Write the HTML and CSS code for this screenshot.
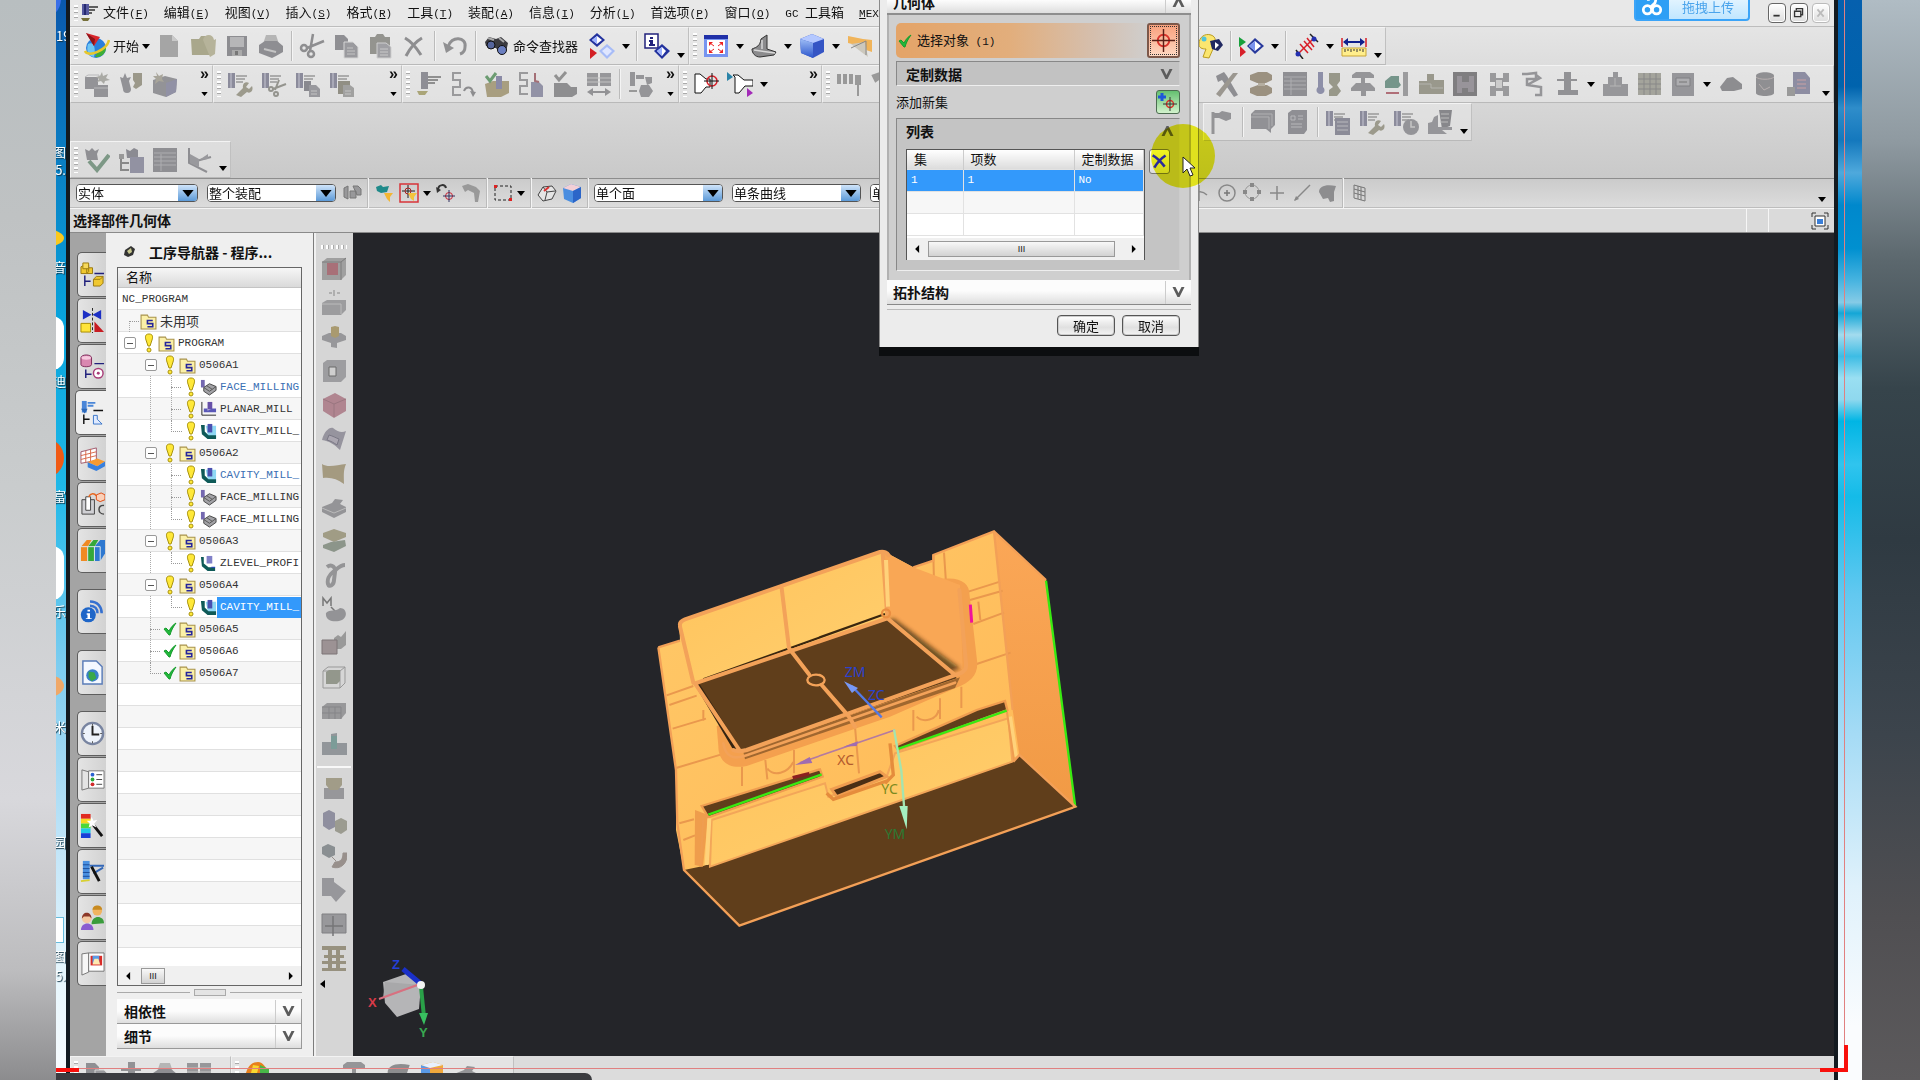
FILE: index.html
```html
<!DOCTYPE html>
<html lang="zh-CN">
<head>
<meta charset="utf-8">
<title>NX 加工</title>
<link rel="stylesheet" href="styles.css">
</head>
<body>
<svg class="sprite" aria-hidden="true">
  <defs>
    <linearGradient id="gBlue" x1="0" y1="0" x2="0" y2="1"><stop offset="0" stop-color="#9dbcf5"/><stop offset="1" stop-color="#2c56cc"/></linearGradient>
    <linearGradient id="gFace" x1="0" y1="0" x2="1" y2="1"><stop offset="0" stop-color="#ffc35c"/><stop offset="1" stop-color="#ffcf6e"/></linearGradient>
    <linearGradient id="gWall" x1="0" y1="0" x2="1" y2="1"><stop offset="0" stop-color="#ffc968"/><stop offset="1" stop-color="#ffb654"/></linearGradient>
    <linearGradient id="gSide" x1="0" y1="0" x2="0" y2="1"><stop offset="0" stop-color="#fba757"/><stop offset="1" stop-color="#f19a45"/></linearGradient>
    <filter id="soft"><feGaussianBlur stdDeviation="7"/></filter>
  </defs>
  <symbol id="app" viewBox="0 0 20 20"><path d="M3 1h7v11H3z" fill="#56599e"/><path d="M5 1h2v11H5z" fill="#262a70"/><path d="M10 4h9M10 7h6M10 10h3" stroke="#333" stroke-width="1.5"/><path d="M2 15h9l-2 3H4z" fill="#76703a"/></symbol>
  <symbol id="nx" viewBox="0 0 28 28"><circle cx="14" cy="16" r="10" fill="#2a7fdc"/><path d="M6 12c6-3 8 4 6 13-6-1-8-7-6-13z" fill="#6fc6f4"/><path d="M13 25c4-8 6-10 11-9 0 5-5 10-11 9z" fill="#3fae35"/><path d="M3 19c3 7 22-1 24-11" fill="none" stroke="#e6c72c" stroke-width="2.5"/><path d="M4 1l14 4-6 9z" fill="#d8262c"/><path d="M4 1l9 6-1 7z" fill="#8c1419"/></symbol>
  <symbol id="new" viewBox="0 0 26 26"><path d="M4 2h12l6 6v16H4z" fill="#a5a5a5"/><path d="M16 2v6h6" fill="#c9c9c9"/></symbol>
  <symbol id="open" viewBox="0 0 26 26"><path d="M1 6h8l2-3h5v5h7v14H2z" fill="#a9a78c"/><path d="M13 7C14 1 23 0 24 7l2-1-1 15-5 3z" fill="#b6b39a"/></symbol>
  <symbol id="save" viewBox="0 0 26 26"><path d="M3 3h20v20H3z" fill="#8d8d91"/><path d="M6 4h14v10H6z" fill="#b6b6b8"/><path d="M8 17h10v6H8z" fill="#aaa"/><path d="M11 18h3v4h-3z" fill="#777"/></symbol>
  <symbol id="print" viewBox="0 0 26 26"><path d="M8 2h10l3 9H5z" fill="#b5b5b5"/><path d="M1 12l6-4h12l6 5v6l-7 4-4 2-13-5z" fill="#8e8e92"/><path d="M6 16l12 3" stroke="#c5c5c5" stroke-width="2"/></symbol>
  <symbol id="cut" viewBox="0 0 26 26"><g fill="none" stroke="#8e8e90" stroke-width="2.5"><path d="M14 1l-3 17M25 8L8 15"/><circle cx="5" cy="15" r="3"/><circle cx="12" cy="21" r="3"/></g></symbol>
  <symbol id="copy" viewBox="0 0 26 26"><path d="M2 2h9l4 4v11H2z" fill="#8f8f93"/><path d="M11 9h9l5 5v11H11z" fill="#9a9a9e" stroke="#d5d5d5"/><path d="M14 15h6M14 18h8M14 21h8" stroke="#c4c4c4"/></symbol>
  <symbol id="paste" viewBox="0 0 26 26"><path d="M3 4h5l2-3h6l2 3h5v17H3z" fill="#94948f"/><path d="M10 10h9l5 4v11H10z" fill="#a0a0a4" stroke="#cfcfcf"/><path d="M13 16h8M13 19h8M13 22h8" stroke="#c9c9c9"/></symbol>
  <symbol id="del" viewBox="0 0 26 26"><path d="M4 5c7 4 11 9 16 17M21 5C14 9 9 15 5 23" fill="none" stroke="#8e8e90" stroke-width="3"/></symbol>
  <symbol id="undo" viewBox="0 0 26 26"><path d="M6 14C9 2 25 4 23 14c0 4-2 6-5 7" fill="none" stroke="#909092" stroke-width="3"/><path d="M1 9l3 11 8-5z" fill="#909092"/></symbol>
  <symbol id="bino" viewBox="0 0 26 26"><path d="M1 9L5 4l7 2 5-2 7 6-2 9-5 3-5-7-5 0-5-2z" fill="#3b3b40"/><circle cx="18" cy="17" r="4.500" fill="#6b7fc0" stroke="#111"/><circle cx="7" cy="12" r="4" fill="#55659c" stroke="#111"/><path d="M4 5l6 2M15 5l5 4" stroke="#aaa" stroke-width="2"/></symbol>
  <symbol id="dia2" viewBox="0 0 26 26"><path d="M8 0l8 7-8 7-8-7z" fill="#23329e"/><path d="M8 3l5 4-5 4-5-4z" fill="#fff"/><path d="M8 3v8L3 7z" fill="#9cb1ff"/><path d="M18 11l8 7-8 8-8-8z" fill="#a7bcf7"/><path d="M18 14l5 4-5 5-5-5z" fill="#dfe6ff"/><path d="M1 15l7 5-7 6z" fill="#d31f24"/></symbol>
  <symbol id="info2" viewBox="0 0 26 26"><path d="M1 1h13v14H1z" fill="#fff" stroke="#22227c" stroke-width="1.500"/><path d="M6 4h3v2H6zM5 7h4v4h2v2H5v-2h1V9H5z" fill="#22227c"/><path d="M18 11l8 7-8 8-8-8z" fill="#23329e"/><path d="M18 14l4 4-4 5-5-5z" fill="#fff"/><path d="M18 14v9l-5-5z" fill="#9cb1ff"/></symbol>
  <symbol id="fit" viewBox="0 0 26 26"><path d="M1 2h24v22H1z" fill="#7794f0"/><path d="M1 2h24v4H1z" fill="#2030a8"/><path d="M4 7h18v14H4z" fill="#fff"/><path d="M6 9h4l-4 4zM20 9h-4l4 4zM6 20h4l-4-4zM20 20h-4l4-4z" fill="#e22"/><path d="M7 10l4 3M19 10l-4 3M7 19l4-3M19 19l-4-3" stroke="#e22"/></symbol>
  <symbol id="shade" viewBox="0 0 26 26"><path d="M1 16c5-2 8-3 9-10l6-4v14l9 3-2 3-14 2c-5 0-8-4-8-8z" fill="#8b8b8d" stroke="#333"/><path d="M3 17l21 3M11 7v9" stroke="#d8d8d8" stroke-width="1.500"/></symbol>
  <symbol id="cube" viewBox="0 0 26 26"><path d="M1 6l12-5 12 5v13l-11 6L2 20z" fill="#3555c4"/><path d="M1 6l12-5 12 5-11 4z" fill="#b4c8ff"/><path d="M1 6l13 4v15L2 20z" fill="url(#gBlue)"/></symbol>
  <symbol id="clip" viewBox="0 0 26 26"><path d="M1 3l15 3 9 1v12l-6-2-6-4-12-3z" fill="#f0b45a"/><path d="M4 11l14-2 3 15-8-6z" fill="#ccc8bd"/><path d="M4 15l15-7v14" fill="none" stroke="#888"/></symbol>
  <symbol id="parrot" viewBox="0 0 26 26"><path d="M2 11C2 4 8 0 14 2s5 8 0 9l2 5-4 9-6-1 3-8c-4 0-7-1-7-5z" fill="#fbe66f" stroke="#bb9c20"/><circle cx="7" cy="6" r="2.500" fill="#4fc3dc"/><path d="M13 8l9-2 4 6-5 6-6-2z" fill="#202860"/><path d="M18 9l4 3-4 4z" fill="#fff"/></symbol>
  <symbol id="play" viewBox="0 0 26 26"><path d="M1 4l7 5-7 5z" fill="#18a03c"/><path d="M2 13l6 6-6 5z" fill="#d8202a"/><path d="M17 5l9 8-9 8-8-8z" fill="#28399c"/><path d="M17 8l6 5-6 5-6-5z" fill="#fff"/><path d="M17 8v10l-6-5z" fill="#7a93ee"/></symbol>
  <symbol id="meas" viewBox="0 0 26 26"><path d="M3 17l7 9M17 1l8 8" stroke="#222" stroke-width="1.500"/><path d="M5 21L21 5M7 11l8 9M11 8l8 9M14 5l7 9" stroke="#d81e28" stroke-width="1.500"/><circle cx="5" cy="21" r="2.500" fill="#2430b0"/><circle cx="21" cy="6" r="2.500" fill="#2430b0"/></symbol>
  <symbol id="ruler" viewBox="0 0 26 26"><path d="M1 5v9M25 5v9" stroke="#d81e28" stroke-width="1.500"/><path d="M3 9h20" stroke="#10208c" stroke-width="2"/><path d="M2 9l5-4v8zM24 9l-5-4v8z" fill="#10208c"/><path d="M1 15h24v8H1z" fill="#ffee8c" stroke="#c9a534"/><path d="M4 16v3M7 16v2M10 16v3M13 16v2M16 16v3M19 16v2M22 16v3" stroke="#333"/></symbol>

  <symbol id="boxes" viewBox="0 0 26 26"><path d="M1 6h13v12H1zM10 14h14v12H10z" fill="#939397"/><path d="M1 6l3-2h11v3M10 17h14" stroke="#b9b9bb" fill="none"/><path d="M18 1l1 4 5-2-2 4 4 2-5 1-1 3-3-3-4 1 2-3-3-2 4-1z" fill="#a9a9a4"/></symbol>
  <symbol id="tooln" viewBox="0 0 26 26"><path d="M2 6l3 1 2-5 2 5 4-1-2 4 2 8a4 4 0 1 1-8 0L3 10z" fill="#929296"/><path d="M15 2h9v12l-6 4-3-2 2-4-2-3z" fill="#9b988a"/></symbol>
  <symbol id="geon" viewBox="0 0 26 26"><path d="M1 9l12-4 12 3-1 13-10 5-13-4z" fill="#939397"/><path d="M14 12l11-4-1 13-10 5z" fill="#9191a5"/><path d="M4 1l3 4 4-2-1 5 2 3-5-1-4 3 1-5-3-3 4 0z" fill="#a8a59a"/></symbol>
  <symbol id="mill" viewBox="0 0 26 26"><path d="M1 2h7v15H1z" fill="#8b8b9b"/><path d="M3 2h2v15H3z" fill="#a9a9b7"/><path d="M9 5h11M9 8h9M9 11h7" stroke="#999" stroke-width="1.500"/></symbol>
  <symbol id="mwrench" viewBox="0 0 26 26"><use href="#mill" width="26" height="26"/><path d="M9 24l7-7c-1-5 3-7 6-5l-3 4 3 2 3-3c2 5-2 8-5 6l-6 5z" fill="#9c9a8c"/></symbol>
  <symbol id="mcut" viewBox="0 0 26 26"><use href="#mill" width="26" height="26"/><g fill="none" stroke="#94948e" stroke-width="2"><path d="M18 9l-4 10M25 13l-13 5"/><circle cx="10" cy="18" r="2"/><circle cx="15" cy="23" r="2"/></g></symbol>
  <symbol id="mcopy" viewBox="0 0 26 26"><use href="#mill" width="26" height="26"/><path d="M9 10h7v10H9z" fill="#89898f"/><path d="M14 14h7l4 4v8H14z" fill="#98989d"/><path d="M16 20h6M16 23h6" stroke="#c4c4c4"/></symbol>
  <symbol id="mpaste" viewBox="0 0 26 26"><use href="#mill" width="26" height="26"/><path d="M9 10h12v13H9z" fill="#918f84"/><path d="M14 14h7l4 3v9H14z" fill="#a1a1a0"/><path d="M16 20h6M16 23h6" stroke="#c4c4c4"/></symbol>
  <symbol id="mgen" viewBox="0 0 26 26"><path d="M5 1h7v17H5z" fill="#8e8e95"/><path d="M12 6h13M12 9h10M12 12h7" stroke="#8f8f8f" stroke-width="2"/><path d="M1 20h11l-3 4H3z" fill="#aaa578"/></symbol>
  <symbol id="path" viewBox="0 0 26 26"><path d="M11 2H3v7h7v7H3v8h8" fill="none" stroke="#9a9a9c" stroke-width="2"/><path d="M14 20c2-5 8-5 9 2" fill="none" stroke="#8c8c8e" stroke-width="2"/><path d="M20 20l6 1-3 5z" fill="#8c8c8e"/></symbol>
  <symbol id="verify" viewBox="0 0 26 26"><path d="M1 13l8-3h16v12l-8 4H3z" fill="#a89e80"/><path d="M12 5h6v13h-6z" fill="#8a8aa6"/><path d="M2 5l4 5 6-8" fill="none" stroke="#6c9c72" stroke-width="3"/></symbol>
  <symbol id="post" viewBox="0 0 26 26"><path d="M10 2H2v7h7v6H2v8h8" fill="none" stroke="#9a9a9c" stroke-width="2"/><path d="M13 11h8l4 4v11H13z" fill="#9292a6"/><path d="M17 2v8l4 1" stroke="#a46f76" stroke-width="2" fill="none"/></symbol>
  <symbol id="shop" viewBox="0 0 26 26"><path d="M2 12h13l4 4h6v7l-5 3H2z" fill="#8e8e90"/><path d="M3 4l4 5 7-8" fill="none" stroke="#929292" stroke-width="3"/></symbol>
  <symbol id="list2" viewBox="0 0 26 26"><path d="M1 2h11v13H1zM14 2h11v13H14z" fill="#97979a"/><path d="M1 7h24M1 11h24" stroke="#c2c2c2"/><path d="M1 21l6-4v3h12v-3l6 4-6 4v-3H7v3z" fill="#929295"/></symbol>
  <symbol id="mach" viewBox="0 0 26 26"><path d="M3 1h5v14H3zM9 4h8v4H9zM18 6h7v6l-5 2zM14 14h8l4 6-4 6h-8l-2-6z" fill="#959598"/><path d="M2 20h8" stroke="#999" stroke-width="2"/></symbol>
  <symbol id="view1" viewBox="0 0 26 26"><path d="M2 3h5l6 5h4v8h-4l-5 6H2z" fill="#fff" stroke="#111"/><circle cx="19" cy="10" r="5" fill="none" stroke="#d81e28" stroke-width="1.500"/><path d="M19 2v16M11 10h15" stroke="#111"/></symbol>
  <symbol id="view2" viewBox="0 0 26 26"><path d="M6 4h5l6 5h9v6h-8l-6 7H8V6z" fill="#fff" stroke="#111"/><path d="M0 1l6 5-6 4z" fill="#2a83a8"/><path d="M20 17l6 5-6 4z" fill="#a32bb8"/></symbol>
  <symbol id="teeth" viewBox="0 0 26 26"><path d="M1 3h4v10H1zM7 3h4v10H7zM13 3h4v10h-4zM19 4h6v10h-6zM21 14h2v11h-2z" fill="#999"/></symbol>
  <symbol id="hammer" viewBox="0 0 26 26"><path d="M2 5l8-4 3 4 11 19-4 2L8 9 4 11z" fill="#8e8e92"/><path d="M24 2L6 26l-4-3L19 2z" fill="#9b9790"/></symbol>
  <symbol id="blk" viewBox="0 0 26 26"><path d="M2 4l8-3h9l5 3v5l-6 3H9L2 9zM2 17l8-3h9l5 3v5l-6 3H9l-7-3z" fill="#9b9180"/><path d="M10 12h7v3h-7z" fill="#b5aea0"/></symbol>
  <symbol id="tbl" viewBox="0 0 26 26"><path d="M1 1h24v24H1z" fill="#8f8f93"/><path d="M2 6h22M2 10h22M2 14h22M2 18h22M9 7v17" stroke="#adadb0"/></symbol>
  <symbol id="therm" viewBox="0 0 26 26"><path d="M2 1h5v15a4 4 0 1 1-5 0z" fill="#8d8fa8"/><path d="M13 2h11v8l-3 4 4 6-4 5h-8v-6l4-3-4-4z" fill="#98988a"/></symbol>
  <symbol id="press" viewBox="0 0 26 26"><path d="M2 4l4-3h14l4 3v3h-9v5h5l5 5v3h-9v5h-5v-5H1v-3l5-5h5V7H2z" fill="#959598"/></symbol>
  <symbol id="gdoor" viewBox="0 0 26 26"><path d="M1 10l6-5h8v6l2 3-3 3H1z" fill="#75958a"/><path d="M19 1h5v24h-5z" fill="#9b9b9d"/><path d="M2 22h13" stroke="#b06f78" stroke-width="2"/></symbol>
  <symbol id="step" viewBox="0 0 26 26"><path d="M1 10h8V3h7v6h10v14H1z" fill="#99988c"/><path d="M1 13h12v4h12" stroke="#b4b4ae" fill="none"/></symbol>
  <symbol id="dark" viewBox="0 0 26 26"><path d="M1 1h24v24H1z" fill="#7f7e80"/><path d="M5 5h5v6h7V5h5v16h-6v-4h-6v5H5z" fill="#98949a"/></symbol>
  <symbol id="axle" viewBox="0 0 26 26"><path d="M4 2h6v5h7V2h6v9h-6v4h6v10h-6v-5h-7v5H4V15h5v-4H4z" fill="#9a9a9c"/><path d="M10 9h6v8h-6z" fill="#ccc"/></symbol>
  <symbol id="zig" viewBox="0 0 26 26"><path d="M2 3h5l9-1v6H7v6l14 2v8h-6M16 4l4 3-13 7" fill="none" stroke="#959598" stroke-width="2.500"/></symbol>
  <symbol id="bolt" viewBox="0 0 26 26"><path d="M10 1h7v7h6v2h-6v9h7v5H4v-5h6v-9H3V8h7z" fill="#929295"/></symbol>
  <symbol id="seat" viewBox="0 0 26 26"><path d="M11 1h5v5h4v7h6v12H1V13h5V6h5z" fill="#97979a"/><path d="M8 15h11M13 7v8" stroke="#b5b5b5"/></symbol>
  <symbol id="grid" viewBox="0 0 26 26"><path d="M2 2h23v22H2z" fill="#a4a49c"/><path d="M2 8h23M2 13h23M2 18h23M8 2v22M14 2v22M20 2v22" stroke="#888"/></symbol>
  <symbol id="scr" viewBox="0 0 26 26"><path d="M2 2h22v23H2z" fill="#96969a"/><path d="M6 7h14v8H6z" fill="#adadb0" stroke="#808084"/><path d="M9 11h8" stroke="#777"/></symbol>
  <symbol id="dome" viewBox="0 0 26 26"><path d="M2 16l7-9 6-1 9 7v5l-8 2H4z" fill="#8d8d90"/></symbol>
  <symbol id="cyl" viewBox="0 0 26 26"><path d="M4 5c0-5 18-5 18 0v17c0 4-18 4-18 0z" fill="#8f8f92"/><path d="M4 6c3 3 15 3 18 0M7 13l5 6 6-3" stroke="#b8b0b0" fill="none"/></symbol>
  <symbol id="rep" viewBox="0 0 26 26"><path d="M7 1h12l5 6v16H7z" fill="#8d8da2"/><path d="M1 16h8v9H1z" fill="#9a9a9a"/><path d="M11 9h9M11 13h9M11 17h9" stroke="#b59ba4" stroke-width="1.500"/></symbol>
  <symbol id="flag" viewBox="0 0 26 26"><path d="M4 3v22" stroke="#949496" stroke-width="3"/><path d="M5 4h5l3-2 9 2v6l-5 2-7-3H5z" fill="#939396"/></symbol>
  <symbol id="stack" viewBox="0 0 26 26"><path d="M5 1h20v15l-4 4v4l-5-4H1V5z" fill="#919195"/><path d="M1 8h18v12M3 5h19v12" fill="none" stroke="#b0b0b2"/></symbol>
  <symbol id="rpt" viewBox="0 0 26 26"><path d="M4 4l4-3h15v20l-3 4H4z" fill="#8f8f94"/><path d="M7 7h4v4H7zM14 7h5M14 10h5M7 15h11M7 18h11" stroke="#b7b7ba" fill="none"/></symbol>
  <symbol id="mlist" viewBox="0 0 26 26"><use href="#mill" width="26" height="26"/><path d="M10 9h15v17H10z" fill="#8b8b97"/><path d="M12 13h11M12 17h11M12 21h11" stroke="#b9b9bd"/></symbol>
  <symbol id="mclock" viewBox="0 0 26 26"><use href="#mill" width="26" height="26"/><circle cx="18" cy="18" r="8" fill="#949498"/><path d="M18 12v6h4" stroke="#c5c5c5" fill="none" stroke-width="1.500"/></symbol>
  <symbol id="docs" viewBox="0 0 26 26"><path d="M12 1h13l-2 16-8 3z" fill="#87878b"/><path d="M1 14l4-1 2-5 4-2v12h14v3H15l5 4H1z" fill="#96969a"/><path d="M14 5h8M14 9h8M13 13h8" stroke="#bbb"/></symbol>
  <symbol id="chkp" viewBox="0 0 26 26"><path d="M1 2l4 2 3-3 3 3 4-2-2 5 1 6H3z" fill="#8f8f93"/><path d="M5 14l8 9L25 8" fill="none" stroke="#7d9886" stroke-width="4"/></symbol>
  <symbol id="org" viewBox="0 0 26 26"><path d="M8 2l4 2 4-3 4 2v8H9z" fill="#8b8b92"/><path d="M12 10h14v16H12z" fill="#9292a2"/><path d="M3 10v13h8M3 16h8" fill="none" stroke="#888" stroke-width="2"/><path d="M1 7h5v5H1z" fill="#999"/></symbol>
  <symbol id="axes" viewBox="0 0 26 26"><path d="M3 1v15l18 9M3 16l22-6" fill="none" stroke="#8e8e92" stroke-width="2"/><path d="M4 7l9 5v8l-9-4zM13 13l9-6v5z" fill="#99999d"/></symbol>

  <symbol id="cubesg" viewBox="0 0 20 20"><path d="M2 5l4-2v13l-4-2zM8 8h6v7H8zM11 3h5l3 3v6h-4z" fill="#98989a" stroke="#777"/></symbol>
  <symbol id="teal" viewBox="0 0 20 20"><path d="M2 4l5-2 2 2 6-1-2 6-6 1-4-2z" fill="#1f8a8a"/><path d="M10 10h9l-3 4v5l-3-3z" fill="#f2b632"/></symbol>
  <symbol id="snap" viewBox="0 0 20 20"><path d="M1 1h18v18H1z" fill="none" stroke="#d8343a" stroke-width="1.500"/><path d="M9 2v13M3 8h13" stroke="#222"/><circle cx="9" cy="8" r="3" fill="none" stroke="#a22"/><path d="M9 10h9l-3 4v4l-3-2z" fill="#f4c43c"/></symbol>
  <symbol id="rot" viewBox="0 0 20 20"><path d="M2 6c1-5 7-5 8-1" fill="none" stroke="#333" stroke-width="2"/><path d="M0 4l1 6 4-3z" fill="#333"/><circle cx="13" cy="13" r="3.500" fill="none" stroke="#c23"/><path d="M13 7v12M7 13h12" stroke="#303060"/></symbol>
  <symbol id="rotg" viewBox="0 0 20 20"><path d="M1 3l6-2 8 3 4 4-2 11h-3l-1-9-6-3-3 2z" fill="#999"/></symbol>
  <symbol id="rect" viewBox="0 0 20 20"><path d="M2 3h16v14H2z" fill="none" stroke="#222" stroke-dasharray="3 2"/><path d="M1 2h3v3H1zM16 15h3v3h-3z" fill="#d22"/></symbol>
  <symbol id="wire" viewBox="0 0 20 20"><path d="M1 12l5-8 9-1 4 5-4 8-9 2z" fill="#e5e5e5" stroke="#444"/><path d="M6 4l4 5 8-1M10 9l-2 8" fill="none" stroke="#444"/><path d="M7 8l5-4" stroke="#d33" stroke-width="2"/></symbol>
  <symbol id="cubes" viewBox="0 0 20 20"><path d="M1 5l8-4 10 3v11l-8 5-9-4z" fill="#4a8ee0"/><path d="M1 5l8-4 10 3-8 4z" fill="#f2cfd6"/><path d="M11 8l8-4v11l-8 5z" fill="#2b65c8"/></symbol>
  <symbol id="q1" viewBox="0 0 20 20"><path d="M7 2v16M1 13c3-5 9-6 14-1" fill="none" stroke="#888" stroke-width="1.500"/></symbol>
  <symbol id="q2" viewBox="0 0 20 20"><circle cx="10" cy="10" r="8" fill="none" stroke="#888" stroke-width="1.500"/><path d="M10 7v6M7 10h6" stroke="#777" stroke-width="1.500"/></symbol>
  <symbol id="q3" viewBox="0 0 20 20"><circle cx="10" cy="9" r="7" fill="none" stroke="#999"/><path d="M8 0h4v4H8zM8 14h4v4H8zM1 7h4v4H1zM15 7h4v4h-4z" fill="#888"/></symbol>
  <symbol id="q4" viewBox="0 0 20 20"><path d="M10 3v14M3 10h14" stroke="#888" stroke-width="1.500"/></symbol>
  <symbol id="q5" viewBox="0 0 20 20"><path d="M18 2L3 17" stroke="#888" stroke-width="1.500"/><path d="M2 18l2-5 3 3z" fill="#888"/></symbol>
  <symbol id="q6" viewBox="0 0 20 20"><path d="M2 9c0-6 7-8 17-6l-2 6v9l-4 1-2-4-5 1z" fill="#8d8d8f"/></symbol>
  <symbol id="q7" viewBox="0 0 20 20"><path d="M5 2l11 3v13L5 15zM5 6l11 3M5 10l11 3M9 3v13M12 4v13" fill="none" stroke="#777"/></symbol>
  <symbol id="full" viewBox="0 0 18 18"><path d="M1 5V1h4M13 1h4v4M17 13v4h-4M5 17H1v-4" fill="none" stroke="#333"/><path d="M4 4h10v10H4z" fill="#fff" stroke="#333"/><path d="M6 7h6v5H6z" fill="#3b7fd8"/></symbol>

  <symbol id="t1" viewBox="0 0 26 26"><path d="M1 5l4-2h4v7l-2 2H1zM7 6h6v6H7zM14 18l3-3h7v7l-3 3h-7z" fill="#f0c830" stroke="#9a7a10"/><path d="M3 1h6v6H3z" fill="#f6d85a" stroke="#9a7a10"/><path d="M14 18h7l3-3" fill="none" stroke="#9a7a10"/><path d="M5 14v11M5 20h6M15 12h10" stroke="#20207c" stroke-width="1.500"/></symbol>
  <symbol id="t2" viewBox="0 0 26 26"><path d="M3 2l9 5-9 5zM22 2l-9 5 9 5z" fill="#1c2fc4"/><path d="M1 16h10v9H1z" fill="#ffe43a" stroke="#a88b00"/><path d="M15 14l10 11H15z" fill="#c81c22"/><path d="M13 0v26" stroke="#222" stroke-dasharray="3 2"/></symbol>
  <symbol id="t3" viewBox="0 0 26 26"><path d="M1 4c0-4 11-4 11 0v7c0 3-11 3-11 0z" fill="#d987b0" stroke="#7c2a58"/><ellipse cx="6.500" cy="4" rx="5" ry="2" fill="#f6c9de"/><path d="M6 16v9M6 21h6M15 10h10" stroke="#20207c" stroke-width="1.500"/><circle cx="19" cy="20" r="5" fill="#fff" stroke="#a83c78" stroke-width="1.500"/><circle cx="19" cy="20" r="1.500" fill="#a83c78"/></symbol>
  <symbol id="t4" viewBox="0 0 26 26"><path d="M3 1h5v12H3z" fill="#4a86d8"/><path d="M2 9h7l-3 5z" fill="#2c68b8"/><path d="M9 3h8M9 6h6" stroke="#4a86d8" stroke-width="2"/><path d="M5 15v10M5 20h6M15 11h10" stroke="#111" stroke-width="1.500"/><path d="M15 16h4v4l5 5h-9z" fill="#dfeaff" stroke="#3a76c8"/></symbol>
  <symbol id="t5" viewBox="0 0 26 26"><path d="M1 6l16-4v13L1 18z" fill="#fff" stroke="#a05a6c"/><path d="M1 10l16-4M1 14l16-4M6 5v12M11 3v13" stroke="#d86a4a"/><path d="M8 17l10-4 8 3-8 5z" fill="#f79a30"/><path d="M8 17l10 4 8-5v5l-9 5-9-4z" fill="#3a80dc"/></symbol>
  <symbol id="t6" viewBox="0 0 26 26"><path d="M2 8h13v15H2z" fill="#d0d0d4" stroke="#444"/><path d="M6 5h5v14H6z" fill="#fff" stroke="#444"/><path d="M9 5c2-4 6-4 8-1" fill="none" stroke="#e86820" stroke-width="1.500"/><path d="M17 3l5-2 4 2v5l-5 2-4-2z" fill="#fbd0b8" stroke="#e04a10"/><path d="M25 14c-7-1-7 9 0 9" fill="none" stroke="#444" stroke-width="1.500"/></symbol>
  <symbol id="t7" viewBox="0 0 26 26"><path d="M1 9l6-7h5l-4 7v15H1z" fill="#f08a24"/><path d="M8 9l6-7h5l-4 7v15H8z" fill="#35a83a"/><path d="M15 9l6-7h5v14l-5 8h-6z" fill="#2e78d0"/><path d="M1 9h20M8 9v15M15 9v15M21 9v15" stroke="#dfe8f0"/></symbol>
  <symbol id="t8" viewBox="0 0 30 26"><circle cx="10" cy="17" r="9" fill="#1f66c8"/><path d="M9 11h3v2H9zM8 15h4v6h2v1H7v-1h2v-4H8z" fill="#fff"/><path d="M12 6c6 0 9 4 9 9M12 1c9 0 14 6 14 14" fill="none" stroke="#3570d0" stroke-width="3"/></symbol>
  <symbol id="t9" viewBox="0 0 26 26"><path d="M3 1h14l6 6v18H3z" fill="#f4f8ff" stroke="#5a7cb8" stroke-width="1.500"/><circle cx="13" cy="16" r="6.500" fill="#3a7fc8"/><path d="M9 12l6 1 2 6-5 3-3-4z" fill="#3aa848"/></symbol>
  <symbol id="t10" viewBox="0 0 26 26"><circle cx="13" cy="13" r="11" fill="#eef3fb" stroke="#7884a0" stroke-width="2.500"/><path d="M13 5v9h7" fill="none" stroke="#222" stroke-width="2"/><path d="M13 3v2M13 21v2M3 13h2M21 13h2" stroke="#555"/></symbol>
  <symbol id="t11" viewBox="0 0 26 26"><path d="M2 3l7 2v17l-7 2z" fill="#e4e4e4" stroke="#777"/><path d="M9 4h16v18H9z" fill="#fff" stroke="#777"/><circle cx="13" cy="8" r="2" fill="#2a62d0"/><circle cx="13" cy="13" r="2" fill="#2ca83a"/><circle cx="13" cy="18" r="2" fill="#d02a2a"/><path d="M17 8h6M17 13h6M17 18h6" stroke="#444"/></symbol>
  <symbol id="t12" viewBox="0 0 26 26"><path d="M1 1h10v5H1z" fill="#e02a20"/><path d="M1 6h10v5H1z" fill="#f8d820"/><path d="M1 11h10v5H1z" fill="#4cd838"/><path d="M1 16h10v5H1z" fill="#20c8e8"/><path d="M1 21h10v5H1z" fill="#1840d8"/><path d="M12 10l11 14" stroke="#111" stroke-width="3"/><path d="M12 4l2 4 4-1-3 4 2 4-4-2-4 2 1-4-3-3 4 0z" fill="#fff"/></symbol>
  <symbol id="t13" viewBox="0 0 26 26"><path d="M3 2h7v19H3z" fill="#4a90e0"/><path d="M3 6h7M3 10h7M3 14h7M3 18h7" stroke="#1c4c98"/><path d="M1 23l9-1" stroke="#d8d030" stroke-width="2"/><path d="M10 7h15M14 15l10-6" stroke="#3468b8" stroke-width="2"/><path d="M12 8l8 15" stroke="#111" stroke-width="3"/></symbol>
  <symbol id="t14" viewBox="0 0 26 26"><circle cx="18" cy="6" r="5" fill="#f0b460"/><path d="M13 5c0-6 10-6 10 0z" fill="#c88a20"/><path d="M12 20c0-10 13-10 13-1z" fill="#3a9c3c"/><circle cx="7" cy="14" r="5" fill="#f4c8a0"/><path d="M2 14c0-8 10-8 10 0l-2-2-6 0z" fill="#8c3828"/><path d="M1 26c0-9 13-9 13 0z" fill="#8a5cd0"/></symbol>
  <symbol id="t15" viewBox="0 0 26 26"><path d="M2 3l7-1v20l-7 3z" fill="#f6f6f6" stroke="#777"/><path d="M9 2h16v19H9z" fill="#fff" stroke="#777"/><path d="M11 5h12v10H11z" fill="#d82c28"/><path d="M13 5h7v8h-7z" fill="#5a9ce8"/><path d="M15 8h4l2 6h-8z" fill="#ffe9b0"/></symbol>

  <symbol id="fold" viewBox="0 0 16 16"><path d="M1 2h6l1 2h7v11H1z" fill="#fbf0a8" stroke="#a8924a"/><path d="M12 7H7v3h5v3H7" fill="none" stroke="#26269c" stroke-width="1.500"/></symbol>
  <symbol id="bang" viewBox="0 0 10 20"><path d="M5 1c4 0 4 3 3 6l-2 6H4L2 7C1 4 1 1 5 1z" fill="#ffe838" stroke="#a8920c"/><circle cx="5" cy="17" r="2" fill="#ffe838" stroke="#a8920c"/></symbol>
  <symbol id="ok" viewBox="0 0 14 14"><path d="M1 7l2-1 3 3c2-4 4-6 7-8-3 4-5 8-6 12H6z" fill="#22b83c" stroke="#169c2c"/></symbol>
  <symbol id="face" viewBox="0 0 18 18"><path d="M1 1h4v8H1z" fill="#7468b0"/><path d="M4 9l6-4 7 3v4l-7 5-6-4z" fill="#a2a2a6" stroke="#444"/><path d="M4 9l6 4 7-5M7 7l6 4" fill="none" stroke="#555"/></symbol>
  <symbol id="plan" viewBox="0 0 18 18"><path d="M2 1v14h15" fill="none" stroke="#222"/><path d="M8 1h5v8H8z" fill="#6650a8"/><path d="M4 8h4v4H4zM13 8h4v4H4" fill="#5a58b8"/></symbol>
  <symbol id="cav" viewBox="0 0 18 18"><path d="M6 3h11v13H9z" fill="#8fd8f4"/><path d="M1 2h4v7l4 4h8v4H8L2 12z" fill="#0f5a58"/><path d="M8 1h5v9H8z" fill="#4a50b0"/></symbol>
  <symbol id="zlv" viewBox="0 0 18 18"><path d="M1 2h3v7l5 4h7v4H8L2 12z" fill="#0f5a58"/><path d="M7 1h6v8H7z" fill="#8080c8"/><path d="M12 13h4" stroke="#2038c0"/></symbol>
  <symbol id="pin" viewBox="0 0 14 14"><path d="M3 5l6-4 4 3-2 6-5 2-4-2z" fill="#333"/><path d="M5 6l4-3 1 4-3 2z" fill="#c8c890"/></symbol>

  <symbol id="v1" viewBox="0 0 26 26"><path d="M1 6l5-4h19v17l-5 5H1z" fill="#9f9f9f"/><path d="M1 6h19v18M20 6l5-4" fill="none" stroke="#7c7c7c"/><path d="M6 7h11v12H6z" fill="#a87078"/></symbol>
  <symbol id="v2" viewBox="0 0 26 26"><path d="M1 13l5-3h19v10l-5 5H1z" fill="#9c9c9e"/><path d="M8 3h3M16 3h3M13 0v6" stroke="#888"/><path d="M1 14h19v10" fill="none" stroke="#bbb"/></symbol>
  <symbol id="v3" viewBox="0 0 26 26"><path d="M1 12l7-3h12l5 3v4l-9 3v5l-6-1v-4l-9-3z" fill="#97979a"/><path d="M10 3l4-1 4 1v9l-4 2-4-2z" fill="#a99a70"/></symbol>
  <symbol id="v4" viewBox="0 0 26 26"><path d="M2 5l4-3h19v17l-5 5H2z" fill="#9d9da0"/><path d="M8 9h7v9H8z" fill="#cfcfcf" stroke="#6a6a6a"/></symbol>
  <symbol id="v5" viewBox="0 0 26 26"><path d="M2 7l12-6 11 6v12l-12 7-11-7z" fill="#b08590"/><path d="M2 7l11 5 12-5M13 12v13" fill="none" stroke="#9a7680"/></symbol>
  <symbol id="v6" viewBox="0 0 26 26"><path d="M1 14C3 6 8 1 12 2c5 4 9 5 13 3l-6 19C13 18 8 15 1 14z" fill="#96949e"/><path d="M8 9c4 1 7 3 10 4l-2 6c-3-2-6-4-10-5z" fill="#aaa6b0" stroke="#7a7885"/></symbol>
  <symbol id="v7" viewBox="0 0 26 26"><path d="M1 4c6 4 15 1 24 0-3 7-2 12-2 20-7-5-13-7-21-6z" fill="#a49a80"/></symbol>
  <symbol id="v8" viewBox="0 0 26 26"><path d="M1 13l10-4 3-4 8 1-3 4 6 3v5l-12 6-12-6z" fill="#949497"/><path d="M1 14l12 5 12-5" fill="none" stroke="#bbb"/></symbol>
  <symbol id="v9" viewBox="0 0 26 26"><path d="M2 5l11-4 12 4v4l-12 5L2 9z" fill="#a09c85"/><path d="M2 17l8-3 14-2 1 6-12 6-11-4z" fill="#8c958a"/></symbol>
  <symbol id="v10" viewBox="0 0 26 26"><path d="M6 5c5-4 9 1 8 5l-1 8c0 5-5 8-6 4s1-9 5-12 7-7 12-7" fill="none" stroke="#949496" stroke-width="4"/></symbol>
  <symbol id="v11" viewBox="0 0 26 26"><path d="M2 10V2l4 5 4-5v8M10 11l4 4" stroke="#777" fill="none" stroke-width="1.500"/><path d="M5 17c4-4 9-1 14-5 8 0 8 12-1 13-6 1-14 0-13-8z" fill="#939396"/></symbol>
  <symbol id="v12" viewBox="0 0 26 26"><path d="M13 8l4-3 3 2 5-6v14l-5 4h-7z" fill="#999"/><path d="M1 10h15v14H1z" fill="#9c9294" stroke="#7d7577"/></symbol>
  <symbol id="v13" viewBox="0 0 26 26"><path d="M2 7l5-4h17v16l-5 5H2zM2 7h17v17M19 7l5-4" fill="none" stroke="#999"/><path d="M5 8l3-2h11v11l-3 3H5z" fill="#93978c"/></symbol>
  <symbol id="v14" viewBox="0 0 26 26"><path d="M1 9l5-4h19v10l-5 6H1z" fill="#98989a"/><path d="M1 9h19v12M8 9v12M14 9v12M1 15h19" fill="none" stroke="#858588"/></symbol>
  <symbol id="v15" viewBox="0 0 26 26"><path d="M1 10h9V2l6-1v10h10v12H1z" fill="#92969a"/><path d="M10 4h6v13h-6z" fill="#7c9c98"/></symbol>
  <symbol id="v16" viewBox="0 0 26 26"><path d="M3 13h20v11H3z" fill="#97979a"/><path d="M5 3h16v7l-4 5H9l-4-5z" fill="#a19c88"/></symbol>
  <symbol id="v17" viewBox="0 0 26 26"><path d="M2 4l6-3 6 3v14l-6 3-6-4z" fill="#8f8f9f"/><path d="M14 12l6-3 6 3v9l-6 4-6-3z" fill="#9b9b90"/></symbol>
  <symbol id="v18" viewBox="0 0 26 26"><path d="M1 4l6-3 7 3v8l-6 3-7-4z" fill="#8a8f92"/><path d="M11 14l4 4M22 10h4c1 11-7 17-15 14l3-5c6 0 8-3 8-9z" stroke="#98908c" fill="#98908c"/></symbol>
  <symbol id="v19" viewBox="0 0 26 26"><path d="M1 1h12v4l12 9-10 11-5-6H1z" fill="#97979b"/></symbol>
  <symbol id="v20" viewBox="0 0 26 26"><path d="M1 3h24v19H1z" fill="#98989b" stroke="#808083"/><path d="M12 5v20M4 15h18" stroke="#757578" stroke-width="1.500"/></symbol>
  <symbol id="v21" viewBox="0 0 26 26"><path d="M1 1h24v4H1zM3 10h20v3H3zM1 16h24v3H1zM1 23h24v3H1zM7 5h4v18H7zM15 5h4v18h-4z" fill="#97917f"/></symbol>
  <symbol id="ball" viewBox="0 0 26 26"><path d="M1 12c2-8 7-11 12-11s9 6 9 11z" fill="#e8801c"/><path d="M8 4l6 1-2 7H6z" fill="#f8d830"/><path d="M15 4l9 4v5h-9z" fill="#48b848"/></symbol>
  <symbol id="pkg" viewBox="0 0 26 26"><path d="M2 4l12-3 10 3v20H2z" fill="#f0a83c"/><path d="M2 4l9 3v17H2z" fill="#5a9ae8"/><path d="M2 4l12-3 10 3-13 3z" fill="#e8f0ff"/></symbol>
  <symbol id="down" viewBox="0 0 8 5"><path d="M0 0h8L4 5z"/></symbol>
  <symbol id="chev" viewBox="0 0 12 12"><path d="M0 1h3l3 6 3-6h3L7 11H5z" fill="#5c5c5c"/></symbol>
  <symbol id="cross" viewBox="0 0 26 26"><circle cx="13" cy="13" r="6" fill="none" stroke="#d8342c" stroke-width="2"/><path d="M13 1v24M1 13h24" stroke="#5a2018" stroke-width="1.500"/></symbol>
</svg>

<div class="desktop">
  <div class="margin-left"></div>
  <div class="wall wall-left">
    <span class="lbl start-edge y36">19</span><i class="blob badge-blue"></i>
    <span class="lbl y152">图</span><span class="lbl y170">5.</span>
    <i class="blob gold"></i><span class="lbl y267">音</span>
    <i class="blob tile y337"></i><span class="lbl y381">迪</span>
    <i class="blob orange"></i><span class="lbl y496">富</span>
    <i class="blob tile y573"></i><span class="lbl y611">乐</span>
    <i class="blob peach"></i><span class="lbl y727">米</span>
    <span class="lbl y842">园</span><i class="blob file"></i>
    <span class="lbl y956">图</span><span class="lbl y976">5.</span>
  </div>

  <div class="app">
    <nav class="menubar">
      <i class="grip"></i><svg class="i20"><use href="#app"/></svg>
      <a href="#">文件<b>(<u>F</u>)</b></a><a href="#">编辑<b>(<u>E</u>)</b></a><a href="#">视图<b>(<u>V</u>)</b></a><a href="#">插入<b>(<u>S</u>)</b></a><a href="#">格式<b>(<u>R</u>)</b></a><a href="#">工具<b>(<u>T</u>)</b></a><a href="#">装配<b>(<u>A</u>)</b></a><a href="#">信息<b>(<u>I</u>)</b></a><a href="#">分析<b>(<u>L</u>)</b></a><a href="#">首选项<b>(<u>P</u>)</b></a><a href="#">窗口<b>(<u>O</u>)</b></a><a href="#"><b>GC </b>工具箱</a><a href="#"><b><u>M</u>EX</b></a>
      <div class="winbtns">
        <button aria-label="最小化"><svg viewBox="0 0 18 18"><path d="M5 12h7" stroke="#333" stroke-width="2"/></svg></button>
        <button aria-label="还原"><svg viewBox="0 0 18 18"><path d="M6 6V4h7v7h-2M4 7h7v6H4z" fill="none" stroke="#333" stroke-width="1.500"/></svg></button>
        <button class="off" aria-label="关闭"><svg viewBox="0 0 18 18"><path d="M5 5l7 8M12 5l-7 8" stroke="#bbb" stroke-width="2"/></svg></button>
      </div>
    </nav>

    <div class="bar">
      <div class="grp">
        <i class="grip"></i>
        <button class="start"><svg class="i28"><use href="#nx"/></svg>开始<svg class="dn"><use href="#down"/></svg></button>
        <button><svg><use href="#new"/></svg></button><button><svg><use href="#open"/></svg></button><button><svg><use href="#save"/></svg></button><button><svg><use href="#print"/></svg></button>
        <i class="sep"></i>
        <button><svg><use href="#cut"/></svg></button><button><svg><use href="#copy"/></svg></button><button><svg><use href="#paste"/></svg></button><button><svg><use href="#del"/></svg></button>
        <i class="sep"></i>
        <button><svg><use href="#undo"/></svg></button>
        <i class="sep"></i>
        <button class="finder"><svg><use href="#bino"/></svg>命令查找器</button>
        <button><svg><use href="#dia2"/></svg></button><svg class="dn"><use href="#down"/></svg>
        <i class="sep"></i>
        <button><svg><use href="#info2"/></svg></button><svg class="dn low"><use href="#down"/></svg>
      </div>
      <div class="grp covered-a">
        <i class="grip"></i>
        <button><svg><use href="#fit"/></svg></button><svg class="dn"><use href="#down"/></svg>
        <button><svg><use href="#shade"/></svg></button><svg class="dn"><use href="#down"/></svg>
        <button><svg><use href="#cube"/></svg></button><svg class="dn"><use href="#down"/></svg>
        <button><svg><use href="#clip"/></svg></button>
      </div>
      <div class="grp">
        <button><svg><use href="#parrot"/></svg></button><i class="sep"></i>
        <button><svg><use href="#play"/></svg></button><svg class="dn"><use href="#down"/></svg><i class="sep"></i>
        <button><svg><use href="#meas"/></svg></button><svg class="dn"><use href="#down"/></svg>
        <button><svg><use href="#ruler"/></svg></button><svg class="dn low"><use href="#down"/></svg>
      </div>
    </div>

    <div class="bar">
      <div class="grp g143"><i class="grip"></i><button><svg><use href="#boxes"/></svg></button><button><svg><use href="#tooln"/></svg></button><button><svg><use href="#geon"/></svg></button><span class="more">»<svg><use href="#down"/></svg></span></div>
      <div class="grp g189"><i class="grip"></i><button><svg><use href="#mwrench"/></svg></button><button><svg><use href="#mcut"/></svg></button><button><svg><use href="#mcopy"/></svg></button><button><svg><use href="#mpaste"/></svg></button><span class="more">»<svg><use href="#down"/></svg></span></div>
      <div class="grp g277"><i class="grip"></i><button><svg><use href="#mgen"/></svg></button><button><svg><use href="#path"/></svg></button><button><svg><use href="#verify"/></svg></button><button><svg><use href="#post"/></svg></button><button><svg><use href="#shop"/></svg></button><button><svg><use href="#list2"/></svg></button><i class="sep"></i><button><svg><use href="#mach"/></svg></button><span class="more">»<svg><use href="#down"/></svg></span></div>
      <div class="grp g143"><i class="grip"></i><button><svg><use href="#view1"/></svg></button><button><svg><use href="#view2"/></svg></button><svg class="dn"><use href="#down"/></svg><span class="more">»<svg><use href="#down"/></svg></span></div>
      <div class="grp fill">
        <i class="grip"></i><button><svg><use href="#teeth"/></svg></button><button><svg><use href="#rotg"/></svg></button>
        <span class="covered-b"></span>
        <button><svg><use href="#hammer"/></svg></button><button><svg><use href="#blk"/></svg></button><button><svg><use href="#tbl"/></svg></button><button><svg><use href="#therm"/></svg></button><button><svg><use href="#press"/></svg></button><button><svg><use href="#gdoor"/></svg></button><button><svg><use href="#step"/></svg></button><button><svg><use href="#dark"/></svg></button><button><svg><use href="#axle"/></svg></button><button><svg><use href="#zig"/></svg></button><button><svg><use href="#bolt"/></svg></button><svg class="dn"><use href="#down"/></svg>
        <button><svg><use href="#seat"/></svg></button><button><svg><use href="#grid"/></svg></button><button><svg><use href="#scr"/></svg></button><svg class="dn"><use href="#down"/></svg>
        <button><svg><use href="#dome"/></svg></button><button><svg><use href="#cyl"/></svg></button><button><svg><use href="#rep"/></svg></button><svg class="dn low"><use href="#down"/></svg>
      </div>
    </div>

    <div class="bar">
      <div class="covered-c"></div>
      <div class="grp">
        <button><svg><use href="#flag"/></svg></button><i class="sep"></i>
        <button><svg><use href="#stack"/></svg></button><button><svg><use href="#rpt"/></svg></button><i class="sep"></i>
        <button><svg><use href="#mlist"/></svg></button><button><svg><use href="#mwrench"/></svg></button><button><svg><use href="#mclock"/></svg></button><button><svg><use href="#docs"/></svg></button><svg class="dn low"><use href="#down"/></svg>
      </div>
    </div>

    <div class="bar last">
      <div class="grp g161"><i class="grip"></i><button><svg><use href="#chkp"/></svg></button><button><svg><use href="#org"/></svg></button><button><svg><use href="#tbl"/></svg></button><button><svg><use href="#axes"/></svg></button><svg class="dn low"><use href="#down"/></svg></div>
    </div>

    <div class="selbar">
      <div class="sel w122"><select aria-label="类型过滤器"><option>实体</option></select><i><svg><use href="#down"/></svg></i></div>
      <div class="sel"><select aria-label="选择范围"><option>整个装配</option></select><i><svg><use href="#down"/></svg></i></div>
      <button><svg><use href="#cubesg"/></svg></button><i class="sep"></i>
      <button><svg><use href="#teal"/></svg></button><button><svg><use href="#snap"/></svg></button><svg class="dn"><use href="#down"/></svg><button><svg><use href="#rot"/></svg></button><button><svg><use href="#rotg"/></svg></button><i class="sep"></i>
      <button><svg><use href="#rect"/></svg></button><svg class="dn"><use href="#down"/></svg><i class="sep"></i>
      <button><svg><use href="#wire"/></svg></button><button><svg><use href="#cubes"/></svg></button><i class="sep"></i>
      <div class="sel"><select aria-label="面规则"><option>单个面</option></select><i><svg><use href="#down"/></svg></i></div>
      <div class="sel"><select aria-label="曲线规则"><option>单条曲线</option></select><i><svg><use href="#down"/></svg></i></div>
      <div class="sel w316"><select aria-label="体规则"><option>单个体</option></select></div>
      <button><svg><use href="#q1"/></svg></button><button><svg><use href="#q2"/></svg></button><button><svg><use href="#q3"/></svg></button><button><svg><use href="#q4"/></svg></button><button><svg><use href="#q5"/></svg></button><button><svg><use href="#q6"/></svg></button><i class="sep"></i><button><svg><use href="#q7"/></svg></button>
      <svg class="dn low end"><use href="#down"/></svg>
    </div>

    <div class="prompt"><strong>选择部件几何体</strong><span class="cell"></span><span class="cell"><svg class="i18"><use href="#full"/></svg></span></div>

    <main class="work">
      <div class="tabs">
        <button><svg><use href="#t1"/></svg></button><button><svg><use href="#t2"/></svg></button><button><svg><use href="#t3"/></svg></button><button class="on"><svg><use href="#t4"/></svg></button><button><svg><use href="#t5"/></svg></button><button><svg><use href="#t6"/></svg></button><button class="gap"><svg><use href="#t7"/></svg></button><button class="gap"><svg><use href="#t8"/></svg></button><button class="gap"><svg><use href="#t9"/></svg></button><button><svg><use href="#t10"/></svg></button><button><svg><use href="#t11"/></svg></button><button><svg><use href="#t12"/></svg></button><button><svg><use href="#t13"/></svg></button><button><svg><use href="#t14"/></svg></button><button><svg><use href="#t15"/></svg></button>
      </div>

      <aside class="panel">
        <h2><svg class="i14"><use href="#pin"/></svg>工序导航器 - 程序...</h2>
        <div class="tree">
          <div class="th">名称</div>
          <ul>
            <li class="m root">NC_PROGRAM</li>
            <li class="cn"><i class="g t first"></i><svg class="ic"><use href="#fold"/></svg>未用项</li>
            <li class="m"><i class="g box"></i><svg class="bg"><use href="#bang"/></svg><svg class="ic"><use href="#fold"/></svg>PROGRAM</li>
            <li class="m"><i class="g"></i><i class="g box"></i><svg class="bg"><use href="#bang"/></svg><svg class="ic"><use href="#fold"/></svg>0506A1</li>
            <li class="m blue"><i class="g"></i><i class="g v"></i><i class="g t"></i><svg class="bg"><use href="#bang"/></svg><svg class="ic"><use href="#face"/></svg>FACE_MILLING</li>
            <li class="m"><i class="g"></i><i class="g v"></i><i class="g t"></i><svg class="bg"><use href="#bang"/></svg><svg class="ic"><use href="#plan"/></svg>PLANAR_MILL</li>
            <li class="m"><i class="g"></i><i class="g v"></i><i class="g l"></i><svg class="bg"><use href="#bang"/></svg><svg class="ic"><use href="#cav"/></svg>CAVITY_MILL_</li>
            <li class="m"><i class="g"></i><i class="g box"></i><svg class="bg"><use href="#bang"/></svg><svg class="ic"><use href="#fold"/></svg>0506A2</li>
            <li class="m blue"><i class="g"></i><i class="g v"></i><i class="g t"></i><svg class="bg"><use href="#bang"/></svg><svg class="ic"><use href="#cav"/></svg>CAVITY_MILL_</li>
            <li class="m"><i class="g"></i><i class="g v"></i><i class="g t"></i><svg class="bg"><use href="#bang"/></svg><svg class="ic"><use href="#face"/></svg>FACE_MILLING</li>
            <li class="m"><i class="g"></i><i class="g v"></i><i class="g l"></i><svg class="bg"><use href="#bang"/></svg><svg class="ic"><use href="#face"/></svg>FACE_MILLING</li>
            <li class="m"><i class="g"></i><i class="g box"></i><svg class="bg"><use href="#bang"/></svg><svg class="ic"><use href="#fold"/></svg>0506A3</li>
            <li class="m"><i class="g"></i><i class="g v"></i><i class="g l"></i><svg class="bg"><use href="#bang"/></svg><svg class="ic"><use href="#zlv"/></svg>ZLEVEL_PROFI</li>
            <li class="m"><i class="g"></i><i class="g box"></i><svg class="bg"><use href="#bang"/></svg><svg class="ic"><use href="#fold"/></svg>0506A4</li>
            <li class="m picked"><i class="g"></i><i class="g v"></i><i class="g l"></i><svg class="bg"><use href="#bang"/></svg><svg class="ic"><use href="#cav"/></svg><span>CAVITY_MILL_</span></li>
            <li class="m"><i class="g"></i><i class="g t"></i><svg class="bg ok"><use href="#ok"/></svg><svg class="ic"><use href="#fold"/></svg>0506A5</li>
            <li class="m"><i class="g"></i><i class="g t"></i><svg class="bg ok"><use href="#ok"/></svg><svg class="ic"><use href="#fold"/></svg>0506A6</li>
            <li class="m"><i class="g"></i><i class="g l"></i><svg class="bg ok"><use href="#ok"/></svg><svg class="ic"><use href="#fold"/></svg>0506A7</li>
          </ul>
          <div class="hscroll"><svg viewBox="0 0 6 10"><path d="M5 0v10L0 5z"/></svg><span class="thumb">III</span><svg viewBox="0 0 6 10"><path d="M1 0v10l5-5z"/></svg></div>
        </div>
        <div class="split"><i></i></div>
        <button class="fold">相依性<span><svg><use href="#chev"/></svg></span></button>
        <button class="fold">细节<span><svg><use href="#chev"/></svg></span></button>
      </aside>

      <div class="vbar">
        <i class="hgrip"></i>
        <button><svg><use href="#v1"/></svg></button><button><svg><use href="#v2"/></svg></button><button><svg><use href="#v3"/></svg></button><button><svg><use href="#v4"/></svg></button><button><svg><use href="#v5"/></svg></button><button><svg><use href="#v6"/></svg></button><button><svg><use href="#v7"/></svg></button><button><svg><use href="#v8"/></svg></button><button><svg><use href="#v9"/></svg></button><button><svg><use href="#v10"/></svg></button><button><svg><use href="#v11"/></svg></button><button><svg><use href="#v12"/></svg></button><button><svg><use href="#v13"/></svg></button><button><svg><use href="#v14"/></svg></button><button><svg><use href="#v15"/></svg></button>
        <i class="hsep"></i>
        <button><svg><use href="#v16"/></svg></button><button><svg><use href="#v17"/></svg></button><button><svg><use href="#v18"/></svg></button><button><svg><use href="#v19"/></svg></button><button><svg><use href="#v20"/></svg></button><button><svg><use href="#v21"/></svg></button>
        <svg class="left" viewBox="0 0 5 8"><path d="M5 0v8L0 4z"/></svg>
      </div>

      <div class="canvas">
        <svg class="part" viewBox="0 0 1380 1290">
          <path d="M55 412L120 392 118 345 728 122 820 172 880 152V135L1062 64 1218 210 1306 890 298 1247 132 1080 108 960 108 770z" fill="url(#gWall)"/>
          <path d="M1062 64L1218 210 1306 890 1138 735 1118 600z" fill="url(#gSide)"/>
          <path d="M132 1080L190 1068 1120 755 1138 735 1306 890 298 1247z" fill="#603e1b"/>
          <g fill="none" stroke="#ea984d" stroke-width="6">
            <path d="M880 135l2 80M912 128l6 90M985 245l95-30M990 270l98-28M1015 275l6 55M1000 342l92-34M1010 462l102-34M80 556l80-28M88 585l82-28M98 656l100-30M108 774l134-40M306 770v58M376 750l6 58M462 720v70M820 600v62M900 565v62M964 530v64M645 650l12 140M118 940l44-12M130 990l35-14M190 600v32M382 776c20 25 60 15 78-20M830 620c20 20 60 10 66-20"/>
          </g>
          <path d="M890 210c70-15 98 12 98 40l24 210c0 40-25 58-60 72L750 620 320 768c-60 12-85-20-85-60l-5-60 720-180z" fill="#f4a04e"/>
          <path d="M130 330L720 126c20-6 28 4 28 16l-6 175L160 518 122 350z" fill="url(#gFace)"/>
          <path d="M728 122L820 172 960 225 968 480 742 320z" fill="#f9a755"/>
          <path d="M760 325c70 50 130 100 200 150l-30 10-190-150z" fill="#3a260f" opacity=".75" filter="url(#soft)"/>
          <path d="M165 520L742 325l203 170L950 505 305 725 290 715z" fill="#603e1b"/>
          <path d="M165 525l115 195c10 6 18 6 24 2L180 524z" fill="#352412"/>
          <path d="M310 726L960 502l-15 32L315 748z" fill="#a0672f"/>
          <path d="M190 508L735 312" stroke="#3a260f" stroke-width="7"/>
          <g fill="none" stroke="#f3a259" stroke-width="12" stroke-linejoin="round" stroke-linecap="round">
            <path d="M120 345c-2-8 6-13 15-17L720 126c12-3 22 3 26 10"/>
            <path d="M120 350l40 168M728 130l14 190M165 520L742 325l203 170M165 520l133 200M280 720c10 5 25 4 40 0L960 490c15-5 20-15 18-30L958 240M425 235l22 180 60 78M545 525l82 95 18 30"/>
            <ellipse cx="528" cy="510" rx="26" ry="16" stroke-width="7"/>
            <path d="M250 700c6 40 30 50 70 36L945 518" stroke-width="8"/>
          </g>
          <path d="M738 150l6 140" stroke="#ffd27a" stroke-width="12"/>
          <circle cx="738" cy="310" r="12" fill="none" stroke="#ea8f42" stroke-width="7"/>
          <path d="M185 888L540 778 548 800 205 922z" fill="#603e1b" stroke="#ef9d50" stroke-width="7"/>
          <path d="M765 708L1010 600 1095 573 1102 600 775 720z" fill="#603e1b" stroke="#ef9d50" stroke-width="7"/>
          <path d="M165 900l40 15-16 155-25-5z" fill="#ef9d4c"/>
          <path d="M215 930L555 820l10 40 175-60 25-70 340-105 12 130L210 1070z" fill="url(#gFace)" stroke="#f3a659" stroke-width="6"/>
          <path d="M575 838L720 785 740 800 590 860z" fill="#4a2e14" stroke="#ef9d50" stroke-width="9"/>
          <path d="M208 925l-8 140M1110 620l18 120" stroke="#ffd27a" stroke-width="12"/>
          <path d="M190 920l-8 150M1100 600l22 150" stroke="#ef9d50" stroke-width="6"/>
          <path d="M560 850l20 18 160-55M750 700l10 95-25 25" fill="none" stroke="#e58c3c" stroke-width="10"/>
          <path d="M205 914L545 793M770 718L1100 602M1218 212L1306 892" stroke="#38ea10" stroke-width="7"/>
          <path d="M991 284l4 54" stroke="#f0129c" stroke-width="9"/>
          <path d="M55 412L120 392M820 172L880 152V135L1062 64 1218 210M55 412L75 550 108 780 112 940 132 1080 298 1247 1306 890 1138 735 1120 755M1062 64L1118 600" fill="none" stroke="#f3a057" stroke-width="7"/>
          <path d="M725 622L635 528" stroke="#5279e6" stroke-width="7"/><path d="M612 514l42 20-18 15z" fill="#7898f4"/>
          <path d="M765 660L480 758" stroke="#b47aa0" stroke-width="5"/><path d="M465 765l44-24 8 18zM610 710l44-16-4 14z" fill="#a06cb0"/>
          <path d="M762 658l22 125 10 130" fill="none" stroke="#a4e4b0" stroke-width="7"/><path d="M778 888h25l-3 70z" fill="#a4efc0"/>
          <path d="M458 803l50-12" stroke="#8c2020" stroke-width="10"/>
          <text x="614" y="502" fill="#2b42cf">ZM</text><text x="684" y="570" fill="#2b42cf">ZC</text><text x="592" y="764" fill="#b35a2d">XC</text><text x="724" y="852" fill="#7c8a20">YC</text><text x="734" y="988" fill="#2c7a33">YM</text>
        </svg>
        <svg class="triad" viewBox="0 0 70 90">
          <path d="M18 29l23-8 15 11-2 24-22 8-12-14z" fill="#b5b5b7"/><path d="M56 32L18 45l2-16" fill="#a8a8aa"/>
          <path d="M55 31L14 46" stroke="#d87080" stroke-width="2"/><path d="M56 31L38 16" stroke="#1a30c8" stroke-width="5"/><path d="M56 34l3 30" stroke="#2aa048" stroke-width="4"/><path d="M54 60h9l-4 12z" fill="#38c060"/>
          <circle cx="56" cy="32" r="4" fill="#f4f4f4"/>
          <text x="27" y="16" fill="#2440d8">Z</text><text x="3" y="54" fill="#d83a48">X</text><text x="54" y="84" fill="#38a850">Y</text>
        </svg>
      </div>
    </main>

    <div class="foot">
      <div class="grp g161"><i class="grip"></i><button><svg><use href="#copy"/></svg></button><button><svg><use href="#bolt"/></svg></button><button><svg><use href="#print"/></svg></button><button><svg><use href="#list2"/></svg></button></div>
      <div class="grp g283"><i class="grip"></i><button><svg><use href="#ball"/></svg></button><span class="tick"></span><button><svg><use href="#press"/></svg></button><span class="half"></span><button><svg><use href="#q6"/></svg></button><button><svg><use href="#pkg"/></svg></button><button><svg><use href="#v8"/></svg></button></div>
    </div>

    <a class="upload" href="#"><span><svg viewBox="0 0 24 24"><g fill="none" stroke="#fff" stroke-width="3"><circle cx="7" cy="14" r="4.500"/><circle cx="17" cy="14" r="4.500"/><path d="M8 4c0-4 8-4 8 0s-5 5-6 8"/></g></svg></span>拖拽上传</a>

    <section class="dialog">
      <header class="sec"><span>几何体</span><i><svg class="flip"><use href="#chev"/></svg></i></header>
      <div class="body">
        <div class="pick"><svg class="i14"><use href="#ok"/></svg><span>选择对象<b> (1)</b></span><button class="target"><svg><use href="#cross"/></svg></button></div>
        <div class="sub"><span>定制数据</span><svg><use href="#chev"/></svg></div>
        <div class="add"><span>添加新集</span><button aria-label="添加新集"><svg viewBox="0 0 22 22"><path d="M5 2v8M1 6h8" stroke="#1f58d8" stroke-width="3"/><circle cx="13" cy="13" r="3.500" fill="none" stroke="#d8342c" stroke-width="1.500"/><path d="M13 6v14M6 13h14" stroke="#333"/></svg></button></div>
        <div class="list">
          <div class="lh"><span>列表</span><svg class="flip"><use href="#chev"/></svg></div>
          <div class="lrow">
            <div class="tblbox">
              <table>
                <thead><tr><th>集</th><th>项数</th><th>定制数据</th></tr></thead>
                <tbody><tr class="hot"><td>1</td><td>1</td><td>No</td></tr><tr><td></td><td></td><td></td></tr><tr class="w"><td></td><td></td><td></td></tr></tbody>
              </table>
              <div class="hscroll"><svg viewBox="0 0 6 10"><path d="M5 0v10L0 5z"/></svg><span class="thumb">III</span><svg viewBox="0 0 6 10"><path d="M1 0v10l5-5z"/></svg></div>
            </div>
            <button class="rm" aria-label="移除"><svg viewBox="0 0 22 22"><path d="M3 4c6 3 10 8 14 13M18 4C12 8 8 13 5 18" fill="none" stroke="#2a2a9c" stroke-width="3"/></svg></button>
          </div>
        </div>
      </div>
      <header class="sec foot-sec"><span>拓扑结构</span><i><svg><use href="#chev"/></svg></i></header>
      <div class="acts"><button>确定</button><button>取消</button></div>
    </section>
    <i class="halo"></i>
    <svg class="cursor" viewBox="0 0 14 22"><path d="M1 1v16l4-4 3 7 3-1-3-7h5z" fill="#fff" stroke="#222"/></svg>
  </div>

  <div class="wall wall-right"></div>
  <div class="margin-right"></div>

  <div class="rec"><i class="rl"></i><i class="rr"></i></div>
  <div class="pill"></div>
</div>
</body>
</html>
```
FILE: styles.css
```css
* { box-sizing: border-box; }
body {
  margin: 0;
  font: 13px/18px "Noto Sans CJK SC", sans-serif;
  color: #111;
}
.sprite { position: absolute; width: 0; height: 0; }
button { font: inherit; color: inherit; border: 0; padding: 0; background: none; white-space: nowrap; }
a { color: inherit; text-decoration: none; }
i { font-style: normal; }
svg { display: block; flex: none; }
.i14 { width: 14px; height: 14px; }
.i18 { width: 18px; height: 18px; }
.i20 { width: 20px; height: 20px; }

.desktop {
  position: relative;
  display: grid;
  grid-template-columns: 56px 10px minmax(0, 1fr) 24px 58px;
  height: 100vh;
  min-height: 720px;
  overflow: hidden;
}
.margin-left { background: linear-gradient(#b8bec0, #bfc2c3 20%, #c9cccd 45%, #d8d8dc 74%, #bcbcbe 90%, #8c8c8e); }
.margin-right { background: linear-gradient(#b0bcc4, #8f9aa1 13%, #5c686e 24%, #36444b 36%, #2f3a42 50%, #3c444c 68%, #504f52 85%, #5c5a5c); }
.wall { position: relative; overflow: hidden; }
.wall-left { background: linear-gradient(#0a58ac, #0a7fc4 15%, #08a4dc 30%, #1fb8e8 45%, #7fcdf0 62%, #c0e4f8 78%, #e6f6fd 90%, #f8fbfd); }
.wall-right { background: linear-gradient(#0660ae, #0063ad 8%, #2f8dca 10%, #1478bd 13%, #4fa9dc 16%, #0088cc 19%, #0090d0 23%, #48b4e0 26%, #86cbe6 28%, #14a6d6 29%, #a3dbee 31%, #3dbce4 33%, #9adff2 35%, #8fd8ee 37%, #00b5e4 39%, #30c4ee 43%, #14bbe8 46%, #62c8f0 55%, #a5dbf5 68%, #dff1fb 82%, #fafcfe 95%); }
.lbl { position: absolute; right: 0; font-size: 13px; color: #fff; text-shadow: 1px 1px 1px #134; white-space: nowrap; }
.lbl.start-edge { right: auto; left: 0; }
.y36 { top: 27px; } .y152 { top: 143px; } .y170 { top: 161px; } .y267 { top: 258px; }
.y381 { top: 372px; } .y496 { top: 487px; } .y611 { top: 602px; } .y727 { top: 718px; }
.y842 { top: 833px; } .y956 { top: 947px; } .y976 { top: 967px; }
.blob { position: absolute; right: 2px; width: 40px; height: 40px; border-radius: 50%; }
.badge-blue { top: -21px; right: 5px; background: #3a6fe8; }
.gold { top: 229px; height: 18px; background: #fbc81c; }
.tile { background: #fff; height: 54px; border-radius: 12px; }
.tile.y337 { top: 316px; } .tile.y573 { top: 546px; }
.orange { top: 438px; background: #f05a14; }
.peach { top: 674px; height: 24px; background: #f0a868; }
.file { top: 917px; height: 26px; border-radius: 0; background: #fff; border: 1px solid #6bd; }

.app {
  position: relative;
  display: flex;
  flex-direction: column;
  min-width: 0;
  border: solid #131a20;
  border-width: 0 4px;
  background: linear-gradient(#eaeaea, #dedede 60px, #c9c9c9 179px, #c9c9c9);
  overflow: hidden;
}
.menubar { display: flex; align-items: center; height: 27px; padding: 0 0 0 2px; border-bottom: 1px solid #bdbdbd; flex: none; background: #e8e8e8; }
.menubar b, .pick b, .m { font-family: "Liberation Mono", monospace; font-size: 11px; font-weight: normal; }
.menubar b { white-space: pre; }
.menubar .i20 { margin-right: 4px; }
.menubar a { margin-right: 15px; white-space: nowrap; }
.grip { width: 4px; height: 26px; margin: 0 2px; flex: none; background: repeating-linear-gradient(#fff 0 2px, #aaa 2px 3px, transparent 3px 5px); }
.menubar .grip { height: 16px; margin-right: 1px; }
.winbtns { display: flex; gap: 4px; margin-left: auto; padding-right: 4px; }
.winbtns button { width: 18px; height: 20px; border: 1px solid #666; border-radius: 4px; background: linear-gradient(#fff, #ddd); box-shadow: inset 0 0 0 1px #fff; }
.winbtns .off { border-color: #bbb; }

.bar { display: flex; height: 38px; flex: none; overflow: hidden; }
.grp { display: flex; align-items: center; flex: none; padding-left: 1px; border: 1px solid; border-color: #f3f3f3 #c0c0c0 #b9b9b9 #f0f0f0; background: rgba(236, 236, 236, .5); }
.grp button, .vbar button { display: flex; align-items: center; justify-content: center; width: 34px; height: 34px; flex: none; }
.grp button svg, .vbar svg { width: 26px; height: 26px; }
.grp .start { width: 72px; justify-content: flex-start; padding-left: 2px; gap: 3px; }
.grp .start .i28 { width: 28px; height: 28px; }
.grp .start .dn { width: 8px; height: 5px; margin: 0; }
.grp .finder { width: 106px; justify-content: flex-start; padding-left: 5px; gap: 3px; }
.sep { width: 7px; height: 30px; flex: none; background: linear-gradient(90deg, transparent 3px, #bbb 3px 4px, #f4f4f4 4px 5px, transparent 5px); }
.dn { width: 8px; height: 5px; margin: 0 3px; flex: none; }
.low { align-self: flex-end; margin-bottom: 6px; }
.g143 { width: 143px; } .g161 { width: 161px; } .g189 { width: 189px; } .g277 { width: 277px; } .g283 { width: 283px; }
.covered-a { width: 502px; }
.covered-b { width: 310px; flex: none; }
.covered-c { width: 1133px; flex: none; }
.fill { flex: 1; }
.fill .low { margin-left: auto; }
.more { display: flex; flex-direction: column; align-items: center; justify-content: space-between; height: 30px; margin: 0 3px 0 auto; padding: 0 0 3px; font: bold 16px/10px "Liberation Sans", sans-serif; }
.more svg { width: 7px; height: 4px; }
.last { border-bottom: 1px solid #8d8d8d; }

.selbar { display: flex; align-items: center; height: 29px; flex: none; padding-left: 3px; background: linear-gradient(#cbcbcb, #dcdcdc); border-bottom: 1px solid #bdbdbd; }
.selbar button { display: flex; justify-content: center; width: 25px; flex: none; }
.selbar button svg { width: 20px; height: 20px; }
.selbar .dn { margin: 0 2px; }
.sel { display: flex; flex: none; width: 129px; height: 18px; margin: 0 3px; border: 1px solid #555; border-radius: 4px; background: #fff; overflow: hidden; }
.sel + .sel { margin-left: 6px; }
.sel select { flex: 1; min-width: 0; appearance: none; border: 0; padding: 0 0 0 1px; background: #fff; font: inherit; line-height: 16px; color: #111; }
.sel i { display: flex; align-items: center; justify-content: center; width: 19px; background: linear-gradient(#cfe4fa, #5c9ad8); }
.sel i svg { width: 12px; height: 7px; }
.w122 { width: 122px; }
.w316 { width: 316px; }
.selbar .end { margin: 0 8px 5px auto; }
.prompt { display: flex; align-items: stretch; height: 25px; flex: none; padding-left: 3px; background: #dadada; border-top: 1px solid #f4f4f4; border-bottom: 1px solid #8a8a8a; }
.prompt strong { flex: 1; font-size: 14px; line-height: 23px; }
.prompt .cell { display: flex; align-items: center; justify-content: flex-end; width: 22px; border-left: 1px solid #f6f6f6; }
.prompt .cell:last-child { width: 66px; padding-right: 5px; }

.work { display: flex; flex: 1; min-height: 0; }
.tabs { width: 36px; flex: none; padding: 19px 0 0 7px; background: #a4a4a4; }
.tabs button { display: flex; align-items: center; justify-content: center; width: 29px; height: 45px; margin-bottom: 1px; border: 1px solid #5e5e5e; border-right: 0; border-radius: 5px 0 0 5px; background: linear-gradient(90deg, #e4e4e4, #d2d2d2); }
.tabs .gap { margin-bottom: 16px; }
.tabs .on { width: 31px; margin-left: -2px; background: #efefef; }
.tabs svg { width: 25px; height: 25px; }
.panel { display: flex; flex-direction: column; width: 208px; flex: none; padding: 4px 11px 7px; background: #efefef; border-right: 1px solid #7c7c7c; }
.panel h2 { display: flex; align-items: center; gap: 13px; height: 30px; margin: 0; padding-left: 5px; font-size: 14px; line-height: 20px; white-space: pre; }
.tree { display: flex; flex-direction: column; flex: 1; min-height: 0; border: 1px solid #666; background: #fff; overflow: hidden; }
.th { height: 20px; flex: none; padding-left: 8px; background: linear-gradient(#f6f6f6, #dadada); border-bottom: 1px solid #c4c4c4; }
.tree ul { flex: 1; min-height: 0; margin: 0; padding: 0; list-style: none; overflow: hidden; background: repeating-linear-gradient(#fff 0 21px, #e0e0e0 21px 22px, #f6f6f6 22px 43px, #e0e0e0 43px 44px); }
.tree li { display: flex; align-items: center; height: 22px; padding-left: 1px; white-space: nowrap; color: #333; }
.tree .root { padding-left: 4px; }
.tree .blue { color: #3a6fb4; }
.tree li.m { font-size: 11px; }
.ic { width: 17px; height: 17px; margin-right: 3px; }
.bg { width: 10px; height: 20px; margin: 0 4px; }
.bg.ok { width: 14px; height: 14px; margin: 0 2px; }
.g { position: relative; width: 21px; height: 22px; flex: none; }
.v, .t { background: repeating-linear-gradient(#aaa 0 1px, transparent 1px 2px) 10px 0 / 1px 22px no-repeat; }
.first { background-position: 10px 11px; }
.t::after, .l::after { content: ""; display: block; width: 10px; height: 11px; margin-left: 10px; border-bottom: 1px dotted #999; }
.l::after { border-left: 1px dotted #999; }
.box { display: flex; align-items: center; justify-content: center; }
.box::before { content: ""; width: 10px; height: 10px; border: 1px solid #999; border-radius: 2px; background: linear-gradient(#555, #555) center / 6px 1px no-repeat, #fff; }
.picked .ic { margin-right: 0; }
.picked span { flex: 1; padding-left: 3px; background: #3399fb; color: #fff; line-height: 21px; }
.hscroll { display: flex; align-items: center; gap: 10px; height: 19px; flex: none; padding: 0 8px; background: #f0f0f0; }
.hscroll svg { width: 5px; height: 8px; }
.thumb { width: 24px; height: 16px; border: 1px solid #999; background: linear-gradient(#f8f8f8, #d2d2d2); font: 9px/14px "Liberation Sans", sans-serif; text-align: center; }
.tree .hscroll svg:last-child { margin-left: auto; }
.split { display: flex; align-items: center; height: 13px; flex: none; }
.split::before, .split::after { content: ""; flex: 1; border-top: 1px solid #aaa; }
.split i { width: 32px; height: 7px; margin: 0 4px; border: 1px solid #aaa; background: #e4e4e4; }
.fold { display: flex; align-items: center; height: 25px; flex: none; padding-left: 7px; border-bottom: 1px solid #999; border-right: 1px solid #999; background: linear-gradient(#fcfcfc 50%, #dedede); font-weight: bold; font-size: 14px; }
.fold span { display: flex; align-items: center; justify-content: center; width: 26px; height: 23px; margin-left: auto; border-left: 1px solid #ccc; }
.fold svg { width: 13px; height: 12px; }
.vbar { display: flex; flex-direction: column; align-items: center; width: 39px; flex: none; padding: 12px 2px 0 0; background: #d6d6d6; border-left: 2px solid #f0f0f0; }
.hgrip { width: 26px; height: 4px; margin-bottom: 3px; background: repeating-linear-gradient(90deg, #fff 0 2px, #aaa 2px 3px, transparent 3px 5px); }
.hsep { width: 34px; height: 9px; flex: none; background: linear-gradient(transparent 4px, #f8f8f8 4px 6px, transparent 6px); }
.vbar .left { width: 5px; height: 8px; margin: 5px auto 0 4px; }
.canvas { position: relative; flex: 1; min-width: 0; background: #242529; overflow: hidden; }
.part { position: absolute; left: 287px; top: 277px; width: 460px; height: 430px; }
.part text { font: 42px "Noto Sans", sans-serif; }
.triad { position: absolute; left: 12px; bottom: 13px; width: 70px; height: 90px; }
.triad text { font: bold 13px "Liberation Sans", sans-serif; }
.foot { display: flex; align-items: flex-start; height: 24px; flex: none; background: #dcdcdc; overflow: hidden; }
.tick { width: 62px; height: 8px; }
.half { width: 10px; height: 8px; }

.upload { position: absolute; right: 84px; top: -6px; display: flex; height: 27px; width: 116px; border: 2px solid #3ba4f8; border-radius: 4px; background: linear-gradient(#e8f6ff, #c0e6ff); color: #4aa4ec; font-size: 13px; line-height: 22px; }
.upload span { width: 33px; margin-right: 13px; padding: 1px 5px; background: #2e9ff5; }
.upload svg { width: 22px; height: 22px; }

.dialog { position: absolute; left: 809px; top: -11px; width: 320px; padding: 0 7px; border: 1px solid #8a8a8a; border-bottom: 0; background: #ececec; box-shadow: 0 9px 0 #0c0e10; }
.sec { display: flex; align-items: center; height: 25px; padding-left: 6px; border-bottom: 2px solid #8e8e8e; background: linear-gradient(#fcfcfc 45%, #dedede); font-weight: bold; font-size: 14px; }
.sec i { display: flex; align-items: center; justify-content: center; width: 26px; height: 23px; margin-left: auto; border-left: 1px solid #ccc; }
.dialog .sec svg, .sub svg, .lh svg { width: 13px; height: 12px; }
.flip { transform: rotate(180deg); }
.body { height: 265px; padding: 8px 9px 0 7px; border: 2px solid #b2b2b2; border-top: 0; border-bottom: 0; background: #cfcfcf; }
.pick { display: flex; align-items: center; height: 35px; padding-left: 2px; border-radius: 5px; background: linear-gradient(90deg, #e4a468, #e2ae7c 40%, #d5bfae 70%, #cfcfcf 90%); font-size: 13px; }
.pick span { margin-left: 5px; white-space: pre; }
.target { width: 33px; height: 35px; margin-left: auto; padding: 3px 2px; border: 2px solid #7d584a; border-radius: 3px; background: linear-gradient(#f8a07c, #ffd8c2); outline: 1px dotted #333; outline-offset: -4px; }
.target svg { width: 25px; height: 25px; }
.sub { display: flex; align-items: center; justify-content: space-between; height: 25px; margin-top: 3px; padding: 0 6px 0 9px; border: 1px solid #888; border-color: #888 #ccc #eee #888; background: #c2c2c2; font-weight: bold; font-size: 14px; }
.add { display: flex; align-items: center; justify-content: space-between; height: 32px; }
.add button { width: 24px; height: 24px; border: 1px solid #4c6c50; border-radius: 3px; background: linear-gradient(#64c070, #d2f2cc); }
.list { height: 153px; padding: 0 9px; border: 1px solid #888; border-color: #888 #ccc #eee #888; background: #c4c4c4; }
.lh { display: flex; align-items: center; justify-content: space-between; height: 30px; margin-right: -4px; padding-bottom: 6px; font-weight: bold; font-size: 14px; line-height: 24px; }
.lrow { display: flex; gap: 4px; }
.tblbox { width: 239px; flex: none; height: 111px; border: 1px solid #555; background: #fff; }
table { width: 100%; border-collapse: collapse; table-layout: fixed; }
th { height: 19px; padding: 0 0 0 7px; border-right: 1px solid #ccc; background: linear-gradient(#fff, #dcdcdc); font-weight: normal; text-align: left; line-height: 18px; white-space: nowrap; }
th:nth-child(1) { width: 56px; }
th:nth-child(2) { width: 111px; }
td { height: 22px; padding: 0 0 0 4px; border: 1px solid #e2e2e2; border-left: 0; background: #f7f7f7; font: 11px/20px "Liberation Mono", monospace; }
.w td { background: #fff; }
.hot td { background: #3399fb; color: #fff; }
.tblbox .hscroll { gap: 8px; height: 22px; margin-top: 2px; }
.tblbox .thumb { flex: 1; margin-right: 8px; }
.rm { width: 24px; height: 25px; border: 1px solid #777; border-radius: 3px; background: linear-gradient(#fff, #ddd); }
.rm svg { position: relative; z-index: 1; }
.foot-sec { border-bottom: 1px solid #888; }
.acts { display: flex; justify-content: flex-end; gap: 7px; height: 38px; margin-top: 4px; padding: 5px 11px 0; border-top: 1px solid #bbb; }
.acts button { width: 58px; height: 21px; border: 1px solid #555; border-radius: 4px; background: linear-gradient(#fff, #e0e0e0 60%, #f4f4f4); line-height: 18px; box-shadow: inset 0 0 0 1px #ccc; }
.halo { position: absolute; left: 1081px; top: 124px; width: 64px; height: 64px; border-radius: 50%; background: #f2f420; mix-blend-mode: multiply; }
.cursor { position: absolute; left: 1112px; top: 156px; width: 14px; height: 22px; z-index: 2; }

.rec { position: absolute; left: 56px; right: 75px; top: 0; bottom: 11px; border: solid #e08080; border-width: 0 1px 1px 0; pointer-events: none; }
.rl, .rr { position: absolute; bottom: -4px; height: 4px; width: 23px; background: #f8100c; }
.rr { right: -4px; width: 28px; height: 27px; border: solid #f8100c; border-width: 0 4px 4px 0; background: none; }
.pill { position: absolute; left: 56px; bottom: 0; width: 536px; height: 7px; background: #3b3c40; border-radius: 0 8px 0 0; }
```
